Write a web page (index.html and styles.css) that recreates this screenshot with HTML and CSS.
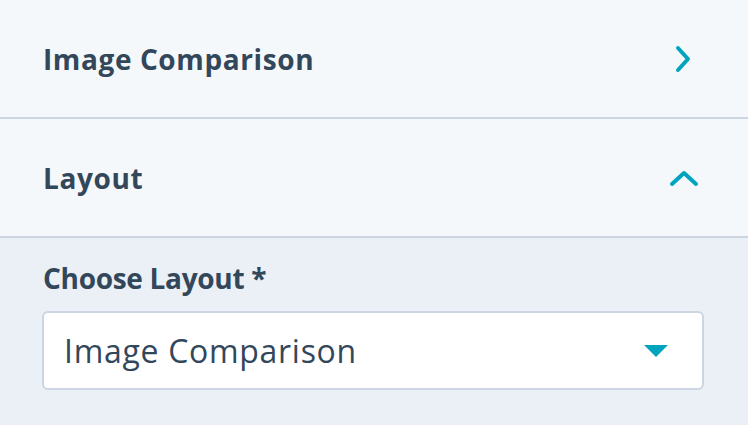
FILE: index.html
```html
<!DOCTYPE html>
<html>
<head>
<meta charset="utf-8">
<link rel="stylesheet" href="styles.css">
</head>
<body>
<div class="panel">
  <div class="acc-header">
    <span class="acc-title">Image Comparison</span>
    <span class="icon">
      <svg width="30" height="30" viewBox="0 0 30 30"><polyline points="9,4 19,15 9,26" fill="none" stroke="#00a4bd" stroke-width="4" stroke-linecap="round" stroke-linejoin="round"/></svg>
    </span>
  </div>
  <div class="acc-header">
    <span class="acc-title">Layout</span>
    <span class="icon">
      <svg width="30" height="30" viewBox="0 0 30 30"><polyline points="3,21 15,10 27,21" fill="none" stroke="#00a4bd" stroke-width="4" stroke-linecap="round" stroke-linejoin="round"/></svg>
    </span>
  </div>
  <div class="acc-body">
    <label class="field-label">Choose Layout *</label>
    <div class="select">
      <span class="select-value">Image Comparison</span>
      <svg class="caret" width="24" height="12" viewBox="0 0 24 12"><polygon points="0,0 24,0 12,12" fill="#00a4bd"/></svg>
    </div>
  </div>
</div>
</body>
</html>
```

FILE: styles.css
```css
html, body {
  margin: 0;
  padding: 0;
  background: #eaf0f6;
  font-family: "Open Sans", Lato, sans-serif;
  color: #33475b;
}
.panel {
  width: 748px;
  height: 425px;
  overflow: hidden;
}
.acc-header {
  height: 117px;
  background: #f5f8fa;
  border-bottom: 2px solid #cbd6e2;
  display: flex;
  align-items: center;
  justify-content: space-between;
  padding: 0 49px 0 43px;
}
.acc-title {
  font-size: 28px;
  font-weight: 700;
  letter-spacing: 0.6px;
}
.icon {
  width: 30px;
  height: 30px;
  display: flex;
}
.acc-body {
  padding: 22px 44px 0 42px;
  display: flex;
  flex-direction: column;
}
.field-label {
  font-size: 28px;
  font-weight: 700;
  line-height: 36px;
  letter-spacing: -0.3px;
  margin-bottom: 15px;
  padding-left: 1px;
}
.select {
  height: 75px;
  background: #fff;
  border: 2px solid #cbd6e2;
  border-radius: 6px;
  display: flex;
  align-items: center;
  justify-content: space-between;
  padding: 0 34px 0 20px;
}
.select-value {
  font-size: 32px;
  font-weight: 400;
  letter-spacing: 0.7px;
}
.caret {
  display: block;
}
```
